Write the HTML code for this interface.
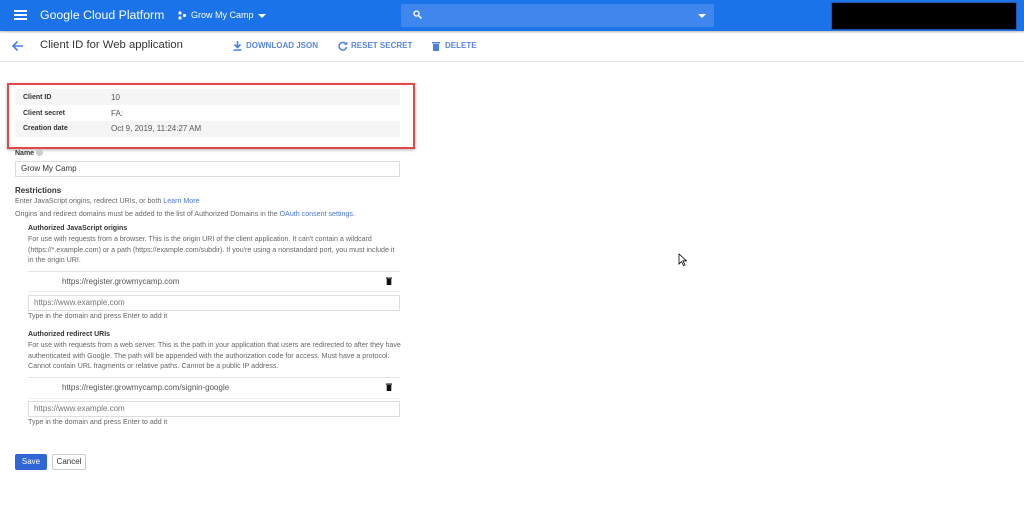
<!DOCTYPE html>
<html><head><meta charset="utf-8"><style>
*{box-sizing:border-box;margin:0;padding:0}
body{width:1024px;height:511px;overflow:hidden;background:#fff;font-family:"Liberation Sans",sans-serif;position:relative;color:#333}
.a{position:absolute;white-space:nowrap}
.s{font-size:7.1px;color:#666}
.inp{position:absolute;border:1px solid #ddd;background:#fff;font-size:8px;color:#777;padding-left:5px;line-height:14px}
.lnk{color:#4a76d4}
</style></head><body>
<div class="a" style="left:0;top:0;width:1024px;height:31px;background:#1a73e8;box-shadow:0 1px 2px rgba(0,0,0,.3)"></div>
<div class="a" style="left:14px;top:10px;width:13px;height:2px;background:#fff;box-shadow:0 4px 0 #fff,0 8px 0 #fff"></div>
<div class="a" style="left:40px;top:8px;font-size:12.3px;color:#fff">Google Cloud Platform</div>
<svg class="a" style="left:178px;top:11px" width="9" height="9"><circle cx="2" cy="2" r="1.6" fill="#fff"/><circle cx="2" cy="7" r="1.6" fill="#fff"/><circle cx="6.5" cy="4.5" r="1.6" fill="#fff"/></svg>
<div class="a" style="left:191px;top:10px;font-size:9px;color:#fff">Grow My Camp</div>
<div class="a" style="left:258px;top:14px;border-left:4px solid transparent;border-right:4px solid transparent;border-top:4px solid #fff"></div>
<div class="a" style="left:401px;top:4px;width:313px;height:23px;background:#3f87ec;border-radius:2px"></div>
<svg class="a" style="left:413px;top:10px" width="9" height="9"><circle cx="3.5" cy="3.5" r="2.5" stroke="#fff" stroke-width="1.3" fill="none"/><line x1="5.5" y1="5.5" x2="8.5" y2="8.5" stroke="#fff" stroke-width="1.5"/></svg>
<div class="a" style="left:698px;top:14px;border-left:4px solid transparent;border-right:4px solid transparent;border-top:4px solid #fff"></div>
<div class="a" style="left:831px;top:2px;width:186px;height:28px;background:#000;border:1px solid #2456a8"></div>

<div class="a" style="left:0;top:61px;width:1024px;height:1px;background:#e2e2e2"></div>
<svg class="a" style="left:11px;top:40px" width="13" height="12"><path d="M12 6H2M6.5 1.5L2 6l4.5 4.5" stroke="#4a7fe0" stroke-width="1.6" fill="none"/></svg>
<div class="a" style="left:40px;top:39px;font-size:11.3px;color:#333">Client ID for Web application</div>
<svg class="a" style="left:233px;top:41px" width="9" height="10"><path d="M4.5 0v6M1.5 3.5l3 3 3-3" stroke="#4a7fe0" stroke-width="1.6" fill="none"/><rect x="0.5" y="8.3" width="8" height="1.5" fill="#4a7fe0"/></svg>
<div class="a" style="left:246px;top:41px;font-size:8px;font-weight:bold;color:#5a86de">DOWNLOAD JSON</div>
<svg class="a" style="left:338px;top:41px" width="10" height="10"><path d="M8.3 3.5A3.8 3.8 0 1 0 8.6 6" stroke="#4a7fe0" stroke-width="1.5" fill="none"/><path d="M6 3.8h3.3V0.5z" fill="#4a7fe0"/></svg>
<div class="a" style="left:351px;top:41px;font-size:8px;font-weight:bold;color:#5a86de">RESET SECRET</div>
<svg class="a" style="left:432px;top:41px" width="8" height="10"><rect x="0" y="1" width="8" height="1.5" fill="#4a7fe0"/><rect x="1" y="3" width="6" height="7" fill="#4a7fe0"/></svg>
<div class="a" style="left:445px;top:41px;font-size:8px;font-weight:bold;color:#5a86de">DELETE</div>

<div class="a" style="left:15px;top:89px;width:385px;height:16px;background:#f5f5f5"></div>
<div class="a" style="left:15px;top:121px;width:385px;height:16px;background:#f5f5f5"></div>
<div class="a" style="left:23px;top:94px;font-size:7px;font-weight:bold;color:#333">Client ID</div>
<div class="a" style="left:111px;top:93px;font-size:8px;color:#555">10</div>
<div class="a" style="left:23px;top:110px;font-size:7px;font-weight:bold;color:#333">Client secret</div>
<div class="a" style="left:111px;top:109px;font-size:8px;color:#555">FA:</div>
<div class="a" style="left:23px;top:125px;font-size:7px;font-weight:bold;color:#333">Creation date</div>
<div class="a" style="left:111px;top:124px;font-size:8px;color:#555">Oct 9, 2019, 11:24:27 AM</div>
<div class="a" style="left:7px;top:83px;width:408px;height:66px;border:2px solid #e2474b;box-shadow:0 1px 3px rgba(0,0,0,.3)"></div>

<div class="a" style="left:15px;top:149px;font-size:7px;font-weight:bold;color:#333">Name <span style="display:inline-block;width:7px;height:7px;border-radius:50%;background:#ccc;vertical-align:-1px"></span></div>
<div class="inp" style="left:15px;top:161px;width:385px;height:16px;color:#333">Grow My Camp</div>
<div class="a" style="left:15px;top:186px;font-size:8px;font-weight:bold;color:#333">Restrictions</div>
<div class="a s" style="left:15px;top:197px">Enter JavaScript origins, redirect URIs, or both <span class="lnk">Learn More</span></div>
<div class="a s" style="left:15px;top:210px">Origins and redirect domains must be added to the list of Authorized Domains in the <span class="lnk">OAuth consent settings</span>.</div>

<div class="a" style="left:28px;top:225px;font-size:7px;font-weight:bold;color:#333">Authorized JavaScript origins</div>
<div class="a s" style="left:28px;top:234px;line-height:10.5px">For use with requests from a browser. This is the origin URI of the client application. It can't contain a wildcard<br>(https://*.example.com) or a path (https://example.com/subdir). If you're using a nonstandard port, you must include it<br>in the origin URI.</div>
<div class="a" style="left:28px;top:271px;width:372px;height:1px;background:#e5e5e5"></div>
<div class="a" style="left:62px;top:277px;font-size:8px;color:#555">https://register.growmycamp.com</div>
<svg class="a" style="left:386px;top:277px" width="6" height="8"><rect x="0" y="0.5" width="6" height="1.2" fill="#111"/><rect x="0.7" y="2" width="4.6" height="6" fill="#111"/></svg>
<div class="a" style="left:28px;top:291px;width:372px;height:1px;background:#eee"></div>
<div class="inp" style="left:28px;top:295px;width:372px;height:16px">https://www.example.com</div>
<div class="a s" style="left:28px;top:312px">Type in the domain and press Enter to add it</div>

<div class="a" style="left:28px;top:331px;font-size:7px;font-weight:bold;color:#333">Authorized redirect URIs</div>
<div class="a s" style="left:28px;top:340px;line-height:10.5px">For use with requests from a web server. This is the path in your application that users are redirected to after they have<br>authenticated with Google. The path will be appended with the authorization code for access. Must have a protocol.<br>Cannot contain URL fragments or relative paths. Cannot be a public IP address.</div>
<div class="a" style="left:28px;top:377px;width:372px;height:1px;background:#e5e5e5"></div>
<div class="a" style="left:62px;top:383px;font-size:8px;color:#555">https://register.growmycamp.com/signin-google</div>
<svg class="a" style="left:386px;top:383px" width="6" height="8"><rect x="0" y="0.5" width="6" height="1.2" fill="#111"/><rect x="0.7" y="2" width="4.6" height="6" fill="#111"/></svg>
<div class="a" style="left:28px;top:398px;width:372px;height:1px;background:#eee"></div>
<div class="inp" style="left:28px;top:401px;width:372px;height:16px">https://www.example.com</div>
<div class="a s" style="left:28px;top:418px">Type in the domain and press Enter to add it</div>

<div class="a" style="left:15px;top:454px;width:32px;height:16px;background:#2f68d4;border-radius:2px;color:#fff;font-size:8px;text-align:center;line-height:16px">Save</div>
<div class="a" style="left:52px;top:454px;width:34px;height:16px;border:1px solid #ccc;border-radius:2px;color:#333;font-size:8px;text-align:center;line-height:14px">Cancel</div>

<svg class="a" style="left:678px;top:253px" width="9" height="13"><path d="M1 1v10l2.5-2.5 2 4 1.5-.7-2-4H8.5z" fill="#fff" stroke="#000" stroke-width="0.8"/></svg>
</body></html>
